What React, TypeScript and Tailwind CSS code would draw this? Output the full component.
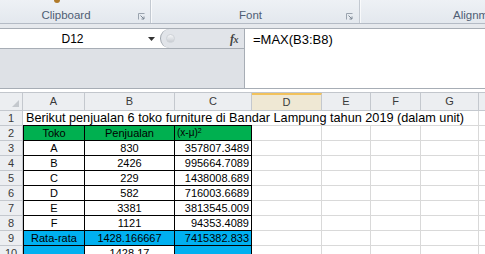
import React from 'react';

const COLS = ['w-[62px]', 'w-[90px]', 'w-[77px]', 'w-[70px]', 'w-[49px]', 'w-[50px]', 'w-[58px]'];
const LETTERS = ['A', 'B', 'C', 'D', 'E', 'F', 'G'];

type Row = { a: string; b: string; c: React.ReactNode; bg: string };

const rows: Row[] = [
  { a: 'Toko', b: 'Penjualan', c: <span className="text-[10px] pl-[2px]">(x-μ)<sup className="text-[7px]">2</sup></span>, bg: 'bg-[#00b050]' },
  { a: 'A', b: '830', c: '357807.3489', bg: 'bg-white' },
  { a: 'B', b: '2426', c: '995664.7089', bg: 'bg-white' },
  { a: 'C', b: '229', c: '1438008.689', bg: 'bg-white' },
  { a: 'D', b: '582', c: '716003.6689', bg: 'bg-white' },
  { a: 'E', b: '3381', c: '3813545.009', bg: 'bg-white' },
  { a: 'F', b: '1121', c: '94353.4089', bg: 'bg-white' },
  { a: 'Rata-rata', b: '1428.166667', c: '7415382.833', bg: 'bg-[#00b0f0]' },
];

function RowHead({ n }: { n: number }) {
  return (
    <div className="w-[23px] shrink-0 h-full flex items-center justify-center bg-[#eceef1] border-r border-b border-[#c4c8ce] text-[11px] text-[#3a3a3a]">
      {n}
    </div>
  );
}

function Launcher() {
  return (
    <svg width="7" height="7" viewBox="0 0 7 7" className="absolute">
      <path d="M0.5 6.5V0.5H6.5" fill="none" stroke="#9aa3ae" />
      <path d="M2.5 2.5L6 6M6 3.5V6H3.5" fill="none" stroke="#7d8794" />
    </svg>
  );
}

export default function App() {
  return (
    <div className="w-[485px] h-[254px] overflow-hidden bg-white font-['Liberation_Sans',Arial,sans-serif] text-black select-none">
      {/* Ribbon bottom strip */}
      <div className="h-[24px] flex bg-gradient-to-b from-[#eef1f5] to-[#e3e8ee] border-b border-[#b4bbc5] text-[11.5px] leading-[14px] text-[#4f5e74]">
        <div className="relative w-[150px] shrink-0 flex items-end justify-center pb-[1px]">
          <div className="absolute left-[54px] top-0 w-[6px] h-[3px] bg-[#b07a2a] rounded-b-sm" />
          <span className="pr-[18px]">Clipboard</span>
          <div className="absolute left-[138px] top-[13px]"><Launcher /></div>
        </div>
        <div className="w-[2px] shrink-0 border-l border-[#c3c9d1] bg-white/70" />
        <div className="relative w-[207px] shrink-0 flex items-end justify-center pb-[1px]">
          <span className="pr-[10px]">Font</span>
          <div className="absolute left-[194px] top-[13px]"><Launcher /></div>
        </div>
        <div className="w-[2px] shrink-0 border-l border-[#c3c9d1] bg-white/70" />
        <div className="flex-1 flex items-end pb-[1px] pl-[92px] whitespace-nowrap overflow-hidden">Alignment</div>
      </div>
      <div className="h-[4px] bg-[#e6e9ed]" />

      {/* Formula bar */}
      <div className="h-[61px] flex border-t border-b border-[#a7adb5]">
        <div className="w-[244px] shrink-0 flex flex-col">
          <div className="h-[20px] flex border-b border-[#a7adb5]">
            <div className="w-[160px] shrink-0 bg-white flex items-center relative">
              <span className="w-[145px] text-center text-[12px]">D12</span>
              <svg width="7" height="4" viewBox="0 0 7 4" className="absolute left-[148px] top-[8px]">
                <path d="M0 0H7L3.5 4Z" fill="#333" />
              </svg>
            </div>
            <div className="flex-1 relative bg-[#e1e4e9] rounded-l-full border-l border-[#9fa5ad] flex items-center">
              <div className="absolute left-[5px] top-[5px] w-[9px] h-[9px] rounded-full bg-gradient-to-b from-[#f5f6f8] to-[#c9cdd3] border border-[#cfd3d8]" />
              <span className="ml-auto mr-[6px] font-['Liberation_Serif',serif] italic font-bold text-[12px] text-[#444] tracking-[-0.5px]">f<span className="text-[10px]">x</span></span>
            </div>
          </div>
          <div className="flex-1 bg-[#dee1e6]" />
        </div>
        <div className="flex-1 bg-white border-l border-[#a7adb5] pl-[8px] pt-[3px] text-[13px] leading-[16px]">=MAX(B3:B8)</div>
      </div>
      <div className="h-[4px] bg-white border-b border-[#c2c6cc]" />

      {/* Sheet */}
      <div className="flex h-[18px]">
        <div className="w-[23px] shrink-0 bg-[#eceef1] border-r border-b border-[#c4c8ce] relative">
          <svg width="7" height="7" viewBox="0 0 7 7" className="absolute right-[3px] bottom-[3px]">
            <path d="M7 0V7H0Z" fill="#c4c8cd" />
          </svg>
        </div>
        {LETTERS.map((l, i) => (
          <div
            key={l}
            className={`${COLS[i]} shrink-0 flex items-center justify-center text-[11px] text-[#3a3a3a] border-r border-b border-[#c4c8ce] ${
              l === 'D' ? 'bg-[#efe8d4] border-t-2 border-t-[#f2c25c]' : 'bg-[#eceef1]'
            }`}
          >
            {l}
          </div>
        ))}
        <div className="flex-1 bg-[#eceef1] border-b border-[#c4c8ce]" />
      </div>

      {/* Row 1 */}
      <div className="flex h-[15px]">
        <RowHead n={1} />
        <div className={`${COLS[0]} shrink-0 border-b border-black relative`}>
          <span className="absolute left-[3px] top-0 whitespace-nowrap text-[12.7px] leading-[15px] z-10">
            Berikut penjualan 6 toko furniture di Bandar Lampung tahun 2019 (dalam unit)
          </span>
        </div>
        <div className={`${COLS[1]} shrink-0 border-b border-black`} />
        <div className={`${COLS[2]} shrink-0 border-b border-black`} />
        <div className={`${COLS[3]} shrink-0 border-b border-[#d9d9d9]`} />
        <div className={`${COLS[4]} shrink-0 border-b border-[#d9d9d9]`} />
        <div className={`${COLS[5]} shrink-0 border-b border-[#d9d9d9]`} />
        <div className={`${COLS[6]} shrink-0 border-b border-r border-[#d9d9d9]`} />
        <div className="flex-1 border-b border-[#d9d9d9]" />
      </div>

      {rows.map((r, i) => (
        <div key={i} className="flex h-[15px] text-[11px] leading-[14px]">
          <RowHead n={i + 2} />
          <div className={`${COLS[0]} shrink-0 ${r.bg} border-l border-r border-b border-black flex items-center justify-center`}>{r.a}</div>
          <div className={`${COLS[1]} shrink-0 ${r.bg} border-r border-b border-black flex items-center justify-center`}>{r.b}</div>
          <div className={`${COLS[2]} shrink-0 ${r.bg} border-r border-b border-black flex items-center ${i === 0 ? 'justify-start' : 'justify-end pr-[2px]'}`}>{r.c}</div>
          {[3, 4, 5, 6].map((c) => (
            <div key={c} className={`${COLS[c]} shrink-0 border-r border-b border-[#d9d9d9]`} />
          ))}
          <div className="flex-1 border-b border-[#d9d9d9]" />
        </div>
      ))}

      {/* Row 10 */}
      <div className="flex h-[15px] text-[11px] leading-[14px]">
        <RowHead n={10} />
        <div className={`${COLS[0]} shrink-0 bg-[#00b0f0] border-l border-r border-b border-black`} />
        <div className={`${COLS[1]} shrink-0 bg-white border-r border-b border-black flex items-center justify-center`}>1428.17</div>
        <div className={`${COLS[2]} shrink-0 bg-[#00b0f0] border-r border-b border-black`} />
        {[3, 4, 5, 6].map((c) => (
          <div key={c} className={`${COLS[c]} shrink-0 border-r border-b border-[#d9d9d9]`} />
        ))}
        <div className="flex-1 border-b border-[#d9d9d9]" />
      </div>
    </div>
  );
}
